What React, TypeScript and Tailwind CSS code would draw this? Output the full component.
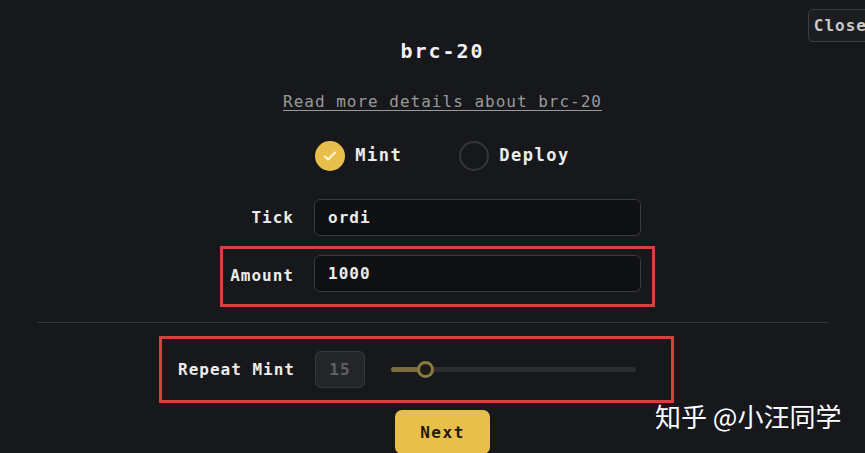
import { useState } from "react";

const mono = { fontFamily: '"DejaVu Sans Mono", "Liberation Mono", monospace' };

function Radio({ checked, label }: { checked: boolean; label: string }) {
  return (
    <div className="flex items-center gap-[10px]">
      {checked ? (
        <span className="flex h-[30px] w-[30px] items-center justify-center rounded-full bg-[#e8bf4a]">
          <svg width="16" height="16" viewBox="0 0 16 16" fill="none">
            <path d="M3 8.5l3.2 3L13 4.5" stroke="#fff7dd" strokeWidth="2" strokeLinecap="round" strokeLinejoin="round" />
          </svg>
        </span>
      ) : (
        <span className="h-[30px] w-[30px] rounded-full border-2 border-[#34363b]" />
      )}
      <span className="text-[17px] font-bold tracking-[1.5px] text-[#ececec]">{label}</span>
    </div>
  );
}

export default function App() {
  const [tick, setTick] = useState("ordi");
  const [amount, setAmount] = useState("1000");
  const repeat = 15;

  return (
    <div className="relative h-[453px] w-[865px] overflow-hidden bg-[#17181c] text-white" style={mono}>
      <button className="absolute right-[-8px] top-[9px] h-[33px] whitespace-nowrap rounded-[5px] border border-[#3c3e43] bg-[#1c1d21] px-[5px] text-[16px] font-bold tracking-[1px] text-[#c9c9c9]">
        Close
      </button>

      <div className="flex flex-col items-center pl-[20px] pt-[36px]">
        <h1 className="text-[20px] font-bold tracking-[2px] text-[#f2f2f2]">brc-20</h1>
        <a className="mt-[24px] text-[16px] tracking-[1px] text-[#9a9a9a] underline underline-offset-[3px]">
          Read more details about brc-20
        </a>

        <div className="mt-[27px] flex items-center gap-[57px]">
          <Radio checked label="Mint" />
          <Radio checked={false} label="Deploy" />
        </div>
      </div>

      <div className="mt-[28px] flex flex-col items-center pl-[10px]">
        <div className="flex w-[435px] items-center gap-[20px]">
          <label className="w-[74px] text-right text-[16px] font-bold tracking-[1px] text-[#ececec]">Tick</label>
          <input
            value={tick}
            onChange={(e) => setTick(e.target.value)}
            className="h-[37px] w-[327px] rounded-[6px] border border-[#3a3b40] bg-[#0f1012] px-[13px] text-[16px] font-bold tracking-[1px] text-[#ececec] outline-none"
          />
        </div>

        <div className="mt-[10px] flex h-[61px] w-[435px] items-start gap-[20px] border-[3px] border-[#d8403f] pt-[6px]">
          <label className="mt-[9px] w-[71px] text-right text-[16px] font-bold tracking-[1px] text-[#ececec]">Amount</label>
          <input
            value={amount}
            onChange={(e) => setAmount(e.target.value)}
            className="h-[37px] w-[327px] rounded-[6px] border border-[#3a3b40] bg-[#0f1012] px-[13px] text-[16px] font-bold tracking-[1px] text-[#ececec] outline-none"
          />
        </div>
      </div>

      <div className="mx-[37px] mt-[15px] h-px bg-[#34363b]" />

      <div className="mt-[13px] flex flex-col items-center">
        <div className="ml-[-32px] flex h-[67px] w-[515px] items-center border-[3px] border-[#d8403f] pl-[16px]">
          <span className="text-[16px] font-bold tracking-[1px] text-[#ececec]">Repeat Mint</span>
          <div className="ml-[20px] flex h-[37px] w-[50px] items-center justify-center rounded-[6px] border border-[#35373c] bg-[#25262a] text-[16px] font-bold tracking-[1px] text-[#5f6065]">
            {repeat}
          </div>
          <div className="relative ml-[26px] flex h-[20px] w-[245px] items-center">
            <div className="h-[5px] w-full rounded-full bg-[#2c2e33]" />
            <div className="absolute left-0 h-[5px] w-[34px] rounded-full bg-[#7b6c3c]" />
            <div className="absolute left-[26px] h-[17px] w-[17px] rounded-full border-[3px] border-[#8a7a44] bg-[#1b1b18]" />
          </div>
        </div>

        <button className="ml-[20px] mt-[7px] h-[44px] w-[95px] rounded-[7px] bg-[#e8bf4a] pt-[2px] text-[16px] font-bold tracking-[1.5px] text-[#201a0a]">
          Next
        </button>
      </div>

      <div
        className="absolute left-[655px] top-[396px] text-[26px] text-white"
        style={{ fontFamily: '"Noto Sans CJK SC", "Noto Sans", sans-serif' }}
      >
        知乎 @小汪同学
      </div>
    </div>
  );
}
